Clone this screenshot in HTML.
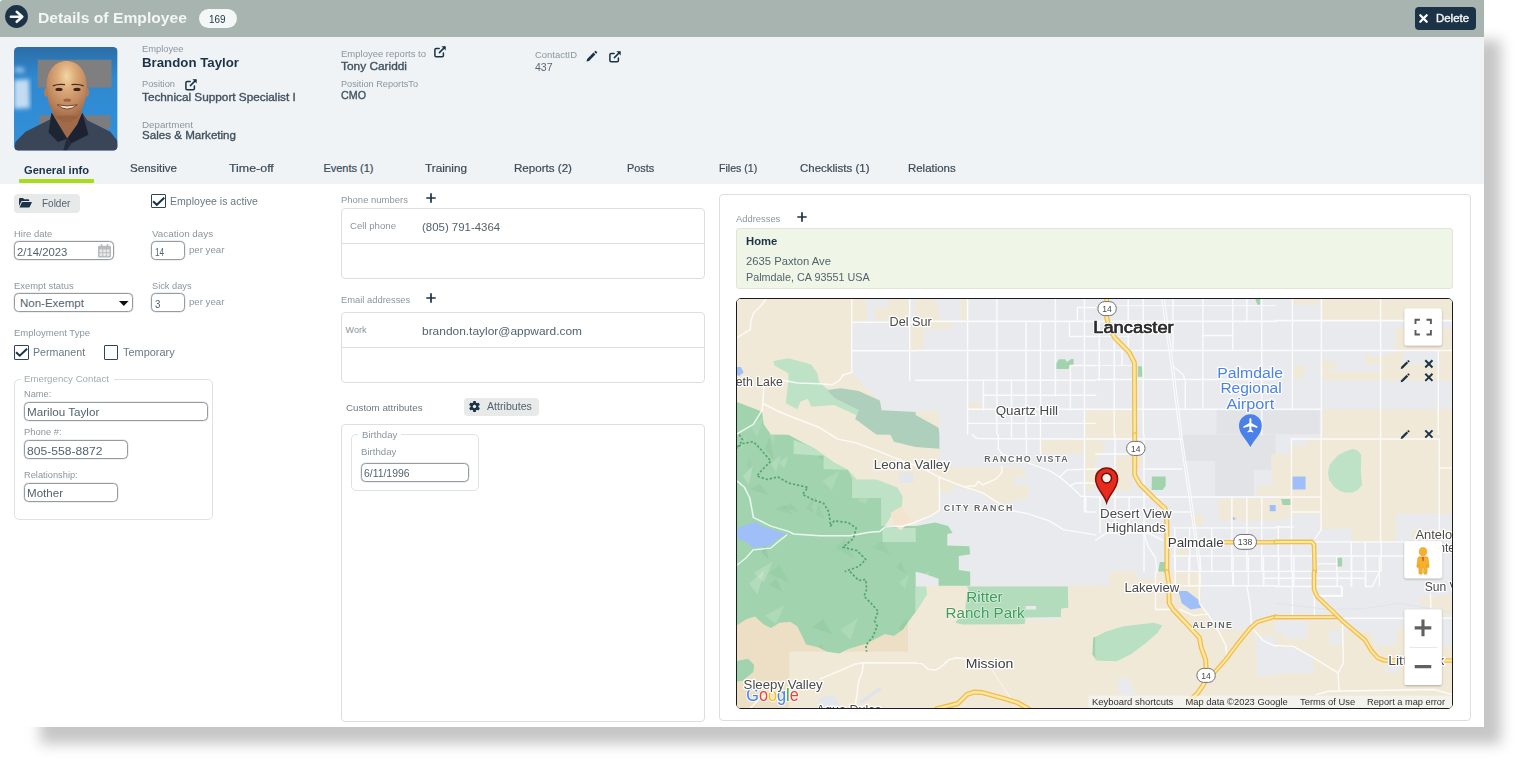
<!DOCTYPE html>
<html lang="en"><head><meta charset="utf-8"><title>Details of Employee</title>
<style>
html,body{margin:0;padding:0;background:#fff;}
body{width:1536px;height:779px;overflow:hidden;position:relative;font-family:"Liberation Sans",sans-serif;}
.a{position:absolute;box-sizing:border-box;}
#shadow{left:40px;top:40px;width:1461px;height:704px;background:rgba(0,0,0,.225);filter:blur(7px);}
#panel{left:0;top:0;width:1484px;height:727px;background:#fff;border-top-left-radius:3px;}
#hdr{left:0;top:0;width:1484px;height:37px;background:#a8b4af;border-top-left-radius:3px;}
#sub{left:0;top:37px;width:1484px;height:147.4px;background:#eff3f6;}
.t{position:absolute;white-space:nowrap;line-height:0;transform-origin:0 0;display:block;}
.inp{border:1px solid #969b9f;border-radius:4.5px;background:#fff;box-shadow:0 0 0 .5px rgba(150,155,160,.35);}
.box{border:1px solid #dcdfe1;border-radius:4px;background:#fff;}
.fs{border:1px solid #dfe2e4;border-radius:5px;}
.btn{background:#e8e9e9;border-radius:4px;}
.cb{border:1.4px solid #2f465a;background:#fff;border-radius:1px;}
.hr{height:1px;background:#dcdfe1;}
.lg{background:#fff;height:4px;}
svg{position:absolute;overflow:visible;}
</style></head><body>
<div class="a" id="shadow"></div>
<div class="a" id="panel"></div>
<div class="a" id="hdr"></div>
<div class="a" id="sub"></div>

<!-- header bar -->
<svg style="left:4.6px;top:4.6px" width="23" height="23" viewBox="0 0 23 23"><circle cx="11.5" cy="11.5" r="11.4" fill="#1b3247"/><path d="M5.8 11.8H16.8M11.7 6.8L17.3 11.8L11.7 16.8" fill="none" stroke="#f4f7f6" stroke-width="2.5" stroke-linecap="round" stroke-linejoin="round"/></svg>
<div class="a" style="left:198.8px;top:9.4px;width:38px;height:19px;border-radius:10px;background:#f3f8f7;"></div>
<div class="a" style="left:1415px;top:6.5px;width:61px;height:23.5px;border-radius:4px;background:#1b3247;"></div>
<svg style="left:1419.3px;top:14.3px" width="9" height="9" viewBox="0 0 9 9"><path d="M1.3 1.3L7.7 7.7M7.7 1.3L1.3 7.7" stroke="#fff" stroke-width="2.3" stroke-linecap="round"/></svg>

<!-- photo -->
<svg style="left:14.2px;top:47.2px" width="103.6" height="103.6" viewBox="0 0 103.6 103.6">
<defs><clipPath id="pc"><rect width="103.6" height="103.6" rx="4.5"/></clipPath>
<linearGradient id="bgG" x1="0" y1="0" x2="0" y2="1"><stop offset="0" stop-color="#2b6ea6"/><stop offset=".12" stop-color="#2d78b8"/><stop offset=".3" stop-color="#2f89d0"/><stop offset="1" stop-color="#3290da"/></linearGradient>
<radialGradient id="skinG" cx=".5" cy=".25" r=".75"><stop offset="0" stop-color="#f4d6a4"/><stop offset=".3" stop-color="#dcaa79"/><stop offset=".7" stop-color="#bd845c"/><stop offset="1" stop-color="#98623f"/></radialGradient>
<filter id="bl1"><feGaussianBlur stdDeviation="2.2"/></filter><filter id="bl2"><feGaussianBlur stdDeviation=".7"/></filter><filter id="bl3"><feGaussianBlur stdDeviation=".45"/></filter></defs>
<g clip-path="url(#pc)">
<rect width="103.6" height="103.6" fill="url(#bgG)"/>
<g filter="url(#bl3)"><polygon points="23.7,12.7 97.5,12.7 97.5,40.5 23.7,40.5" fill="#7f7f80"/>
<polygon points="25.2,68.3 96.3,68.3 96.3,82.0 25.2,82.0" fill="#7c7d7f"/></g>
<g filter="url(#bl1)"><polygon points="0.0,33.1 15.1,32.3 15.8,61.1 0.0,61.8" fill="#c4dcf2"/><polygon points="0.7,20.1 10.1,20.4 10.1,25.9 0.7,25.6" fill="#8fbce6"/></g>
<g filter="url(#bl2)"><polygon points="38.8,58.9 67.6,58.9 67.6,76.2 61.8,87.7 53.2,92.0 44.6,84.8 38.8,73.3" fill="#a16b48"/>
<polygon points="0.0,105.0 1.4,94.9 11.5,84.8 35.9,72.6 37.7,65.8 43.1,76.2 53.2,91.3 63.3,77.6 68.3,65.8 73.3,73.3 96.3,84.8 103.2,93.5 104.2,105.0" fill="#3a4558"/>
<polygon points="37.7,65.8 53.2,91.7 43.9,94.9 34.5,85.5" fill="#1f2633"/>
<polygon points="68.3,65.8 74.5,87.7 57.5,96.3 53.2,91.7 63.3,77.6" fill="#1d2431"/>
<polygon points="52.5,91.7 57.5,96.3 51.8,105.0 48.9,105.0" fill="#232b3a"/>
<path d="M52.5 14.1 C63.3 14.1 71.9 23.0 72.7 37.4 C73.2 47.4 70.7 58.9 65.0 67.9 C60.7 73.6 56.1 75.1 52.5 75.1 C48.9 75.1 44.3 73.6 40.3 67.9 C34.5 58.9 32.1 47.4 32.5 37.4 C33.1 23.0 41.7 14.1 52.5 14.1Z" fill="url(#skinG)"/>
<ellipse cx="31.9" cy="45.3" rx="1.6" ry="4.5" fill="#b57c57"/>
<ellipse cx="73.3" cy="45.3" rx="1.6" ry="4.5" fill="#b57c57"/>
</g>
<g filter="url(#bl3)">
<path d="M38.8 38.8Q44.9 36.5 51.0 37.7" stroke="#4a2f22" stroke-width="1.3" fill="none"/>
<path d="M57.5 37.7Q63.6 36.5 69.7 38.8" stroke="#4a2f22" stroke-width="1.3" fill="none"/>
<ellipse cx="45.0" cy="42.4" rx="3.6" ry="1.7" fill="#3a241b"/>
<ellipse cx="63.0" cy="42.4" rx="3.6" ry="1.7" fill="#3a241b"/>
<ellipse cx="53.2" cy="53.2" rx="3.8" ry="1.6" fill="#9c6545"/>
<path d="M43.1 57.8Q53.2 66.4 63.3 57.8Q53.2 60.0 43.1 57.8Z" fill="#f1e4d8" stroke="#7a3f30" stroke-width="1"/>
<ellipse cx="53.2" cy="70.4" rx="11" ry="2.2" fill="#8f5c3f" opacity=".55"/>
</g></g></svg>

<!-- header icons -->
<svg class="ext" style="left:185.4px;top:78.6px" width="12" height="11.5" viewBox="0 0 12 11.5"><g><path d="M5.2 2.4H2.2Q.9 2.4 .9 3.7V9.6Q.9 10.8 2.2 10.8H8.2Q9.4 10.8 9.4 9.6V7" fill="none" stroke="#1b3247" stroke-width="1.5" stroke-linecap="round"/><path d="M5.4 6.6L10.6 1.4" stroke="#1b3247" stroke-width="1.5" stroke-linecap="round"/><path d="M7.4 .3H11.7V4.6Z" fill="#1b3247"/></g></svg>
<svg class="ext" style="left:434px;top:45.6px" width="12" height="11.5" viewBox="0 0 12 11.5"><g><path d="M5.2 2.4H2.2Q.9 2.4 .9 3.7V9.6Q.9 10.8 2.2 10.8H8.2Q9.4 10.8 9.4 9.6V7" fill="none" stroke="#1b3247" stroke-width="1.5" stroke-linecap="round"/><path d="M5.4 6.6L10.6 1.4" stroke="#1b3247" stroke-width="1.5" stroke-linecap="round"/><path d="M7.4 .3H11.7V4.6Z" fill="#1b3247"/></g></svg>
<svg class="ext" style="left:609px;top:50.6px" width="12" height="11.5" viewBox="0 0 12 11.5"><g><path d="M5.2 2.4H2.2Q.9 2.4 .9 3.7V9.6Q.9 10.8 2.2 10.8H8.2Q9.4 10.8 9.4 9.6V7" fill="none" stroke="#1b3247" stroke-width="1.5" stroke-linecap="round"/><path d="M5.4 6.6L10.6 1.4" stroke="#1b3247" stroke-width="1.5" stroke-linecap="round"/><path d="M7.4 .3H11.7V4.6Z" fill="#1b3247"/></g></svg>
<svg style="left:585.6px;top:50.4px" width="12" height="12" viewBox="0 0 12 12"><g><path d="M.5 11.5L1.1 9L7.5 2.6L9.4 4.5L3 10.9Z" fill="#1b3247"/><path d="M8.2 1.9L9.1 1Q9.5.6 9.9 1L11 2.1Q11.4 2.5 11 2.9L10.1 3.8Z" fill="#1b3247"/></g></svg>

<!-- tab underline -->
<div class="a" style="left:18.7px;top:179px;width:75.6px;height:4.4px;background:#a8dc1a;border-radius:1px;"></div>

<!-- left column -->
<div class="a btn" style="left:14px;top:194px;width:66.2px;height:19px;"></div>
<svg style="left:18.8px;top:198.4px" width="13" height="9.4" viewBox="0 0 13 9.4"><path d="M0 1Q0 0 1 0H4L5.2 1.3H9.2Q10.2 1.3 10.2 2.3V3.1H3.2Q2.4 3.1 2 3.9L0 8Z" fill="#1b3247"/><path d="M.5 9.4L2.7 4.5Q3 3.9 3.6 3.9H12.4Q13.1 3.9 12.8 4.6L10.8 8.8Q10.5 9.4 9.9 9.4Z" fill="#1b3247"/></svg>
<div class="a cb" style="left:151px;top:194px;width:14.7px;height:14.2px;"></div>
<svg style="left:151px;top:194px" width="14.7" height="14.2" viewBox="0 0 14.7 14.2"><g><path d="M2.1 7.2L5.8 10.8L13.3 3.7" fill="none" stroke="#1b3247" stroke-width="2"/></g></svg>

<div class="a inp" style="left:14px;top:241.3px;width:99.6px;height:18.9px;"></div>
<svg style="left:98px;top:244.3px" width="13" height="13.6" viewBox="0 0 13 13.6"><rect x="0" y="1.7" width="13" height="11.9" rx="1.3" fill="#b9bcbe"/><rect x="2.6" y="0" width="1.8" height="3.4" rx=".8" fill="#b9bcbe"/><rect x="8.6" y="0" width="1.8" height="3.4" rx=".8" fill="#b9bcbe"/><g fill="#e9eaea"><rect x="1.6" y="5.5" width="2.7" height="2.7"/><rect x="5.2" y="5.5" width="2.7" height="2.7"/><rect x="8.8" y="5.5" width="2.7" height="2.7"/><rect x="1.6" y="9.2" width="2.7" height="2.7"/><rect x="5.2" y="9.2" width="2.7" height="2.7"/><rect x="8.8" y="9.2" width="2.7" height="2.7"/></g></svg>
<div class="a inp" style="left:151px;top:241.3px;width:33.6px;height:18.9px;"></div>
<div class="a inp" style="left:14px;top:293.2px;width:118.7px;height:19.1px;"></div>
<svg style="left:118.6px;top:301px" width="9.6" height="5" viewBox="0 0 9.6 5"><path d="M0 0H9.6L4.8 5Z" fill="#111"/></svg>
<div class="a inp" style="left:151px;top:293.2px;width:33.6px;height:19.1px;"></div>

<div class="a cb" style="left:14px;top:345.4px;width:14.5px;height:14.2px;"></div>
<svg style="left:14px;top:345.4px" width="14.5" height="14.2" viewBox="0 0 14.7 14.2"><g><path d="M2.1 7.2L5.8 10.8L13.3 3.7" fill="none" stroke="#1b3247" stroke-width="2"/></g></svg>
<div class="a cb" style="left:103.9px;top:345.4px;width:14.5px;height:14.2px;"></div>

<div class="a fs" style="left:14.4px;top:379px;width:198.6px;height:141px;"></div>
<div class="a lg" style="left:21px;top:377px;width:93px;"></div>
<div class="a inp" style="left:23.7px;top:402.3px;width:184.5px;height:18.5px;"></div>
<div class="a inp" style="left:23.7px;top:440.1px;width:104.3px;height:18.7px;"></div>
<div class="a inp" style="left:23.7px;top:483px;width:94.3px;height:18.6px;"></div>

<!-- middle column -->
<svg style="left:425.7px;top:192.9px" width="10" height="10" viewBox="0 0 10 10"><g><path d="M5 .3V9.7M.3 5H9.7" stroke="#1b3247" stroke-width="1.7" fill="none"/></g></svg>
<div class="a box" style="left:341px;top:208.3px;width:364px;height:70.3px;"></div>
<div class="a hr" style="left:342px;top:243px;width:362px;"></div>
<svg style="left:425.7px;top:292.6px" width="10" height="10" viewBox="0 0 10 10"><g><path d="M5 .3V9.7M.3 5H9.7" stroke="#1b3247" stroke-width="1.7" fill="none"/></g></svg>
<div class="a box" style="left:341px;top:312.2px;width:364px;height:70.6px;"></div>
<div class="a hr" style="left:342px;top:347.2px;width:362px;"></div>
<div class="a btn" style="left:463.9px;top:397.6px;width:75.1px;height:18.8px;"></div>
<svg style="left:468.6px;top:401.4px" width="11" height="11" viewBox="0 0 11 11"><g fill="#1b3247"><circle cx="5.5" cy="5.5" r="3.9"/><g><rect x="4.1" y="0" width="2.8" height="11" rx=".6"/></g><g transform="rotate(60 5.5 5.5)"><rect x="4.1" y="0" width="2.8" height="11" rx=".6"/></g><g transform="rotate(120 5.5 5.5)"><rect x="4.1" y="0" width="2.8" height="11" rx=".6"/></g></g><circle cx="5.5" cy="5.5" r="1.7" fill="#e8e9e9"/></svg>
<div class="a box" style="left:341px;top:424px;width:364px;height:297.6px;"></div>
<div class="a fs" style="left:351.2px;top:434.3px;width:127.5px;height:56.3px;"></div>
<div class="a lg" style="left:357.5px;top:432.5px;width:43.5px;"></div>
<div class="a inp" style="left:360.6px;top:463.2px;width:108.7px;height:18.7px;"></div>

<!-- right column -->
<div class="a box" style="left:719.3px;top:194px;width:752px;height:527.4px;"></div>
<svg style="left:796.7px;top:212.4px" width="10" height="10" viewBox="0 0 10 10"><g><path d="M5 .3V9.7M.3 5H9.7" stroke="#1b3247" stroke-width="1.7" fill="none"/></g></svg>
<div class="a" style="left:736.3px;top:227.5px;width:716.4px;height:61.3px;background:#eff6e8;border:1px solid #dfe6d6;border-radius:3px;"></div>
<div class="a" id="map" style="left:736.3px;top:298.3px;width:716.4px;height:410.8px;border:1px solid #1c1c1c;border-radius:5px;overflow:hidden;background:#e8eaed;">
<svg style="left:0;top:0" width="714.4" height="408.8" viewBox="737.3 299.3 714.4 408.8">
<rect x="736" y="298" width="718" height="412" fill="#e8eaed"/>
<polygon points="736.0,298.0 867.0,298.0 867.0,320.9 852.0,322.6 852.0,373.6 881.9,403.5 881.9,410.5 916.0,412.3 938.9,410.5 938.9,434.9 939.7,449.1 939.7,467.5 1021.5,467.5 1028.5,477.2 1014.4,477.2 1014.4,485.1 1028.5,485.1 1028.5,499.2 1014.4,500.0 1010.9,503.6 991.6,501.8 982.8,494.8 952.9,486.0 952.9,493.0 939.7,493.0 939.7,512.3 930.1,517.6 916.0,522.9 916.0,526.4 736.0,526.4" fill="#f1e9d8"/>
<polygon points="874.9,307.7 887.2,307.7 887.2,299.8 909.1,299.8 909.1,321.7 874.9,321.7" fill="#f1e9d8" />
<polygon points="910.9,324.4 916.0,324.4 916.0,349.9 910.9,349.9" fill="#f1e9d8" />
<polygon points="916.0,299.8 937.1,299.8 939.7,320.9 952.9,322.6 952.9,328.8 923.9,329.6 923.9,349.9 916.0,349.9" fill="#f1e9d8" />
<polygon points="960.8,299.8 967.0,299.8 967.0,320.9 960.8,320.9" fill="#f1e9d8" />
<polygon points="969.6,403.1 981.9,403.1 981.9,409.1 969.6,409.1" fill="#f1e9d8" />
<polygon points="1086.2,410.5 1096.0,410.5 1096.0,434.9 1086.2,434.9" fill="#f1e9d8" />
<polygon points="1096.0,410.5 1132.0,410.5 1132.0,434.9 1096.0,434.9" fill="#f1e9d8" />
<polygon points="1292.7,299.8 1319.9,299.8 1319.9,305.0 1292.7,305.0" fill="#f1e9d8" />
<polygon points="1322.1,299.8 1452.7,299.8 1452.7,320.0 1322.1,320.0" fill="#f1e9d8" />
<polygon points="1395.5,328.8 1452.7,328.8 1452.7,350.7 1395.5,350.7" fill="#f1e9d8" />
<polygon points="1322.1,358.6 1339.3,364.8 1328.7,371.8 1322.1,371.8" fill="#f1e9d8" />
<polygon points="1322.1,371.8 1452.7,371.8 1452.7,380.6 1322.1,380.6" fill="#f1e9d8" />
<polygon points="1365.6,351.6 1371.8,357.8 1381.5,356.0 1402.6,351.6 1402.6,364.8 1365.6,364.8" fill="#f1e9d8" />
<polygon points="1381.5,364.8 1439.5,364.8 1439.5,371.8 1381.5,371.8" fill="#f1e9d8" />
<polygon points="1440.4,350.7 1452.7,350.7 1452.7,380.6 1440.4,380.6" fill="#f1e9d8" />
<polygon points="1295.3,365.7 1307.6,365.7 1300.6,379.7 1292.7,379.7" fill="#f1e9d8" />
<polygon points="1322.1,409.6 1452.7,409.6 1452.7,434.9 1322.1,434.9" fill="#f1e9d8" />
<polygon points="1276.0,410.5 1319.9,410.5 1319.9,434.9 1276.0,434.9" fill="#e1e3e7" />
<polygon points="1216.8,410.5 1276.0,410.5 1276.0,434.9 1216.8,434.9" fill="#e1e3e7" />
<polygon points="1041.7,440.3 1084.8,440.3 1084.8,453.5 1041.7,453.5" fill="#f1e9d8" />
<polygon points="1086.2,435.0 1096.0,435.0 1096.0,489.5 1086.2,489.5" fill="#f1e9d8" />
<polygon points="1182.1,435.0 1276.0,435.0 1276.0,454.3 1271.8,454.3 1271.8,470.2 1254.2,470.2 1254.2,496.5 1215.5,496.5 1215.5,461.4 1185.6,461.4" fill="#e1e3e7" />
<polygon points="1096.0,435.0 1132.0,435.0 1132.0,438.9 1096.0,438.9" fill="#f1e9d8" />
<polygon points="1096.0,440.3 1101.3,440.3 1106.5,447.3 1096.0,461.4" fill="#f1e9d8" />
<polygon points="1115.3,456.1 1142.6,456.1 1142.6,468.4 1132.0,468.4 1132.0,491.2 1117.1,491.2" fill="#f1e9d8" />
<polygon points="1219.0,499.2 1276.0,499.2 1276.0,521.1 1219.0,521.1" fill="#f1e9d8" />
<polygon points="1271.8,454.3 1276.0,454.3 1276.0,496.5 1257.7,496.5 1257.7,486.0 1271.8,486.0" fill="#f1e9d8" />
<polygon points="1191.8,514.1 1203.2,515.9 1203.2,526.4 1194.4,526.4" fill="#f1e9d8" />
<polygon points="1176.0,550.1 1189.2,550.1 1189.2,556.3 1176.0,556.3" fill="#f1e9d8" />
<polygon points="1276.0,435.0 1452.7,435.0 1452.7,514.1 1396.4,514.1 1396.4,542.2 1351.6,542.2 1351.6,528.2 1319.9,529.9 1319.9,514.1 1293.6,514.1 1293.6,517.6 1276.0,521.1" fill="#f1e9d8" />
<polygon points="1276.0,435.0 1319.9,435.0 1319.9,438.5 1306.8,438.5 1306.8,445.5 1290.9,445.5 1290.9,454.3 1276.0,454.3" fill="#e8eaed" />
<polygon points="1412.2,529.9 1452.7,529.9 1452.7,540.5 1412.2,540.5" fill="#f1e9d8" />
<polygon points="736.0,572.0 916.0,572.0 916.0,708.9 736.0,708.9" fill="#f1e9d8" />
<polygon points="736.0,607.2 908.3,607.2 908.3,652.0 789.6,652.0 789.6,708.9 736.0,708.9" fill="#ecdfc5" />
<polygon points="916.0,586.1 1096.0,586.1 1096.0,708.9 916.0,708.9" fill="#f1e9d8" />
<polygon points="1096.0,572.0 1201.5,572.0 1201.5,603.6 1208.5,614.2 1219.0,630.0 1248.9,630.0 1254.2,623.0 1276.0,615.9 1276.0,637.0 1256.0,637.0 1257.7,675.7 1276.0,675.7 1276.0,708.9 1096.0,708.9" fill="#f1e9d8" />
<polygon points="1096.0,572.0 1110.1,572.0 1110.1,586.1 1096.0,586.1" fill="#e8eaed" />
<polygon points="1136.4,572.0 1155.8,572.0 1155.8,579.0 1136.4,579.0" fill="#e8eaed" />
<polygon points="1118.9,677.5 1127.6,677.5 1136.4,695.0 1118.9,695.0" fill="#e8eaed" />
<polygon points="1271.8,634.4 1276.0,634.4 1276.0,645.8 1271.8,644.1" fill="#f1e9d8" />
<polygon points="1276.0,633.5 1284.8,633.5 1284.8,638.8 1307.6,638.8 1307.6,621.2 1342.8,621.2 1342.8,631.8 1372.7,632.6 1374.4,645.8 1452.7,645.8 1452.7,708.9 1276.0,708.9" fill="#f1e9d8" />
<polygon points="1395.5,645.8 1397.3,630.0 1406.1,624.7 1406.1,645.8" fill="#f1e9d8" />
<polygon points="1420.1,598.4 1452.7,594.9 1452.7,615.9 1443.0,615.9 1430.7,607.2 1420.1,605.4" fill="#f1e9d8" />
<polygon points="1276.0,647.6 1293.6,646.7 1313.8,656.4 1313.8,674.0 1276.0,674.0" fill="#e8eaed" />
<polygon points="1329.6,630.9 1341.9,630.9 1341.9,644.9 1329.6,644.9" fill="#e8eaed" />
<polygon points="1385.0,666.9 1399.0,666.9 1399.0,673.1 1385.0,673.1" fill="#e8eaed" />
<polygon points="1256.0,637.0 1276.0,637.0 1276.0,675.7 1257.7,675.7" fill="#e8eaed" />
<polygon points="773.8,361.3 788.7,358.6 811.6,364.8 817.7,373.6 819.5,382.4 827.4,389.4 834.4,398.2 859.0,410.5 857.3,415.8 834.4,405.2 811.6,407.0 808.1,399.1 801.0,401.7 797.5,409.6 786.1,403.5 788.7,380.6 788.7,373.6 774.7,365.7" fill="#bde2c6" />
<polygon points="827.4,390.3 841.5,388.5 859.0,391.2 880.1,400.8 881.9,410.5 916.0,412.3 916.0,415.4 938.9,428.1 939.7,435.0 939.7,449.1 916.0,447.3 894.2,442.0 890.7,435.0 876.6,434.9 855.5,419.3 859.0,410.5 834.4,398.2" fill="#adcfbc"/>
<polygon points="736.0,401.7 758.9,410.5 762.4,412.3 764.1,424.6 771.2,434.9 788.7,435.0 815.1,449.1 834.4,463.1 848.5,470.2 852.9,478.9 852.9,498.3 881.9,498.3 881.9,526.4 916.0,526.4 935.3,522.9 948.5,526.4 952.9,533.4 947.6,534.3 947.6,545.7 969.6,546.6 970.5,554.5 959.1,556.3 959.1,570.4 970.5,572.0 970.5,586.1 938.9,586.1 938.9,579.0 923.9,573.8 916.0,572.0 916.0,612.4 911.8,617.7 903.0,630.0 894.2,636.2 885.4,634.4 876.6,638.8 866.1,644.1 848.5,649.3 839.7,653.7 827.4,652.0 818.6,647.6 806.3,644.9 802.8,637.0 797.5,626.5 790.5,622.1 779.9,623.0 771.2,628.2 764.1,624.7 755.3,616.8 746.5,619.5 736.0,626.5" fill="#a1d4ae"/>
<clipPath id="fclip"><polygon points="736.0,401.7 758.9,410.5 762.4,412.3 764.1,424.6 771.2,434.9 788.7,435.0 815.1,449.1 834.4,463.1 848.5,470.2 852.9,478.9 852.9,498.3 881.9,498.3 881.9,526.4 916.0,526.4 935.3,522.9 948.5,526.4 952.9,533.4 947.6,534.3 947.6,545.7 969.6,546.6 970.5,554.5 959.1,556.3 959.1,570.4 970.5,572.0 970.5,586.1 938.9,586.1 938.9,579.0 923.9,573.8 916.0,572.0 916.0,612.4 911.8,617.7 903.0,630.0 894.2,636.2 885.4,634.4 876.6,638.8 866.1,644.1 848.5,649.3 839.7,653.7 827.4,652.0 818.6,647.6 806.3,644.9 802.8,637.0 797.5,626.5 790.5,622.1 779.9,623.0 771.2,628.2 764.1,624.7 755.3,616.8 746.5,619.5 736.0,626.5"/></clipPath><g clip-path="url(#fclip)">
<polygon points="798.6,443.5 814.0,437.9 807.1,448.0" fill="#ffffff" fill-opacity="0.15"/>
<polygon points="806.4,419.8 813.2,429.4 798.9,424.6" fill="#2f7a4a" fill-opacity="0.06"/>
<polygon points="751.1,428.1 763.6,416.4 757.9,437.8" fill="#ffffff" fill-opacity="0.11"/>
<polygon points="779.7,565.0 789.4,582.7 769.1,573.8" fill="#2f7a4a" fill-opacity="0.06"/>
<polygon points="920.6,416.9 938.7,409.5 930.5,422.9" fill="#ffffff" fill-opacity="0.11"/>
<polygon points="760.0,483.7 768.8,495.4 750.3,489.5" fill="#2f7a4a" fill-opacity="0.07"/>
<polygon points="857.5,500.0 871.6,494.5 865.2,504.4" fill="#ffffff" fill-opacity="0.11"/>
<polygon points="776.5,578.5 782.8,592.2 769.6,585.4" fill="#2f7a4a" fill-opacity="0.07"/>
<polygon points="822.7,481.4 840.1,470.7 832.3,490.2" fill="#ffffff" fill-opacity="0.12"/>
<polygon points="845.4,538.9 854.6,558.9 835.3,548.9" fill="#2f7a4a" fill-opacity="0.05"/>
<polygon points="921.3,435.1 933.7,423.9 928.1,444.3" fill="#ffffff" fill-opacity="0.12"/>
<polygon points="829.4,415.0 837.3,435.5 820.8,425.2" fill="#2f7a4a" fill-opacity="0.07"/>
<polygon points="901.7,485.0 917.8,475.2 910.5,493.1" fill="#ffffff" fill-opacity="0.16"/>
<polygon points="823.3,619.2 833.0,635.3 812.7,627.2" fill="#2f7a4a" fill-opacity="0.07"/>
<polygon points="749.3,583.9 764.8,570.7 757.8,594.6" fill="#ffffff" fill-opacity="0.18"/>
<polygon points="791.2,503.4 799.1,512.7 782.6,508.0" fill="#2f7a4a" fill-opacity="0.06"/>
<polygon points="769.4,434.9 777.2,423.6 773.7,444.1" fill="#ffffff" fill-opacity="0.11"/>
<polygon points="784.3,504.7 793.5,514.9 774.2,509.8" fill="#2f7a4a" fill-opacity="0.06"/>
<polygon points="840.7,630.3 858.4,618.2 850.5,640.1" fill="#ffffff" fill-opacity="0.13"/>
<polygon points="815.7,496.5 824.9,519.9 805.5,508.2" fill="#2f7a4a" fill-opacity="0.05"/>
<polygon points="771.0,464.1 781.0,455.2 776.5,471.5" fill="#ffffff" fill-opacity="0.16"/>
<polygon points="787.1,406.0 793.4,420.6 780.3,413.3" fill="#2f7a4a" fill-opacity="0.07"/>
<polygon points="916.2,581.1 929.9,571.0 923.8,589.3" fill="#ffffff" fill-opacity="0.17"/>
<polygon points="748.1,634.4 756.7,656.5 738.7,645.4" fill="#2f7a4a" fill-opacity="0.08"/>
<polygon points="811.4,506.7 819.7,496.6 816.0,515.1" fill="#ffffff" fill-opacity="0.11"/>
<polygon points="750.6,458.2 755.1,472.3 745.6,465.3" fill="#2f7a4a" fill-opacity="0.04"/>
<polygon points="738.0,443.6 746.4,435.6 742.6,450.1" fill="#ffffff" fill-opacity="0.10"/>
<polygon points="901.5,561.6 906.0,574.4 896.6,568.0" fill="#2f7a4a" fill-opacity="0.06"/>
<polygon points="806.1,436.3 824.1,423.2 816.0,447.1" fill="#ffffff" fill-opacity="0.15"/>
<polygon points="828.5,426.9 832.6,441.0 823.9,434.0" fill="#2f7a4a" fill-opacity="0.05"/>
<polygon points="893.0,446.2 900.3,433.4 897.0,456.6" fill="#ffffff" fill-opacity="0.15"/>
<polygon points="765.4,543.5 769.1,560.4 761.4,552.0" fill="#2f7a4a" fill-opacity="0.09"/>
<polygon points="899.4,582.5 909.8,574.6 905.2,589.1" fill="#ffffff" fill-opacity="0.12"/>
<polygon points="882.4,540.8 890.9,554.8 872.9,547.8" fill="#2f7a4a" fill-opacity="0.05"/>
<polygon points="889.8,656.2 907.8,644.6 899.7,665.6" fill="#ffffff" fill-opacity="0.18"/>
<polygon points="876.4,462.8 883.2,477.2 868.8,470.0" fill="#2f7a4a" fill-opacity="0.04"/>
<polygon points="743.2,476.3 753.6,465.6 748.9,485.0" fill="#ffffff" fill-opacity="0.20"/>
<polygon points="821.6,643.9 831.6,667.3 810.7,655.6" fill="#2f7a4a" fill-opacity="0.06"/>
<polygon points="779.2,462.8 788.8,456.2 784.5,468.3" fill="#ffffff" fill-opacity="0.16"/>
<polygon points="906.4,619.3 913.0,638.1 899.1,628.7" fill="#2f7a4a" fill-opacity="0.08"/>
<polygon points="753.9,573.4 772.7,562.0 764.2,582.8" fill="#ffffff" fill-opacity="0.18"/>
<polygon points="827.4,450.5 836.0,464.5 817.9,457.5" fill="#2f7a4a" fill-opacity="0.08"/>
<polygon points="919.7,505.9 931.9,493.2 926.4,516.4" fill="#ffffff" fill-opacity="0.17"/>
<polygon points="769.8,437.4 774.3,460.0 764.9,448.7" fill="#2f7a4a" fill-opacity="0.08"/>
<polygon points="765.3,615.8 785.1,605.4 776.2,624.2" fill="#ffffff" fill-opacity="0.14"/>
<polygon points="840.6,438.4 844.2,462.0 836.6,450.2" fill="#2f7a4a" fill-opacity="0.07"/>
</g>
<polygon points="848.5,470.2 857.3,479.8 876.6,479.8 897.7,487.7 903.0,496.5 902.1,507.1 894.2,512.3 890.7,517.6 885.4,526.4 881.9,526.4 881.9,498.3 852.9,498.3 852.9,478.9" fill="#bde2c6" />
<polygon points="882.8,528.2 916.0,528.2 916.0,542.2 882.8,542.2" fill="#bde2c6" />
<polygon points="794.0,440.3 815.1,449.1 834.4,463.1 848.5,470.2 823.9,469.3 823.9,456.1 794.0,454.3" fill="#bde2c6" />
<polygon points="890.7,513.2 901.2,507.1 911.8,519.4 901.2,530.8 895.1,526.4" fill="#f2e4cf" />
<polygon points="736.0,661.6 748.3,659.0 754.5,665.2 753.6,672.2 743.0,681.0 736.0,681.9" fill="#a1d4ae" />
<polygon points="916.0,586.9 926.5,586.9 927.4,594.9 919.5,607.2 916.0,612.4" fill="#bde2c6" />
<polygon points="967.0,586.9 1068.1,586.9 1068.6,608.0 1061.5,608.9 1061.0,617.4 1025.9,618.1 1025.0,624.4 962.6,624.7 955.6,623.0 958.2,619.5 965.2,618.6 966.1,603.6 968.7,589.6" fill="#b2dcbc" />
<polygon points="1025.9,606.3 1036.4,606.3 1036.4,609.8 1025.9,609.8" fill="#e8eaed" />
<polygon points="1025.9,618.1 1061.9,618.1 1061.9,620.3 1025.9,620.3" fill="#e8eaed" />
<polygon points="1093.5,637.9 1096.0,637.0 1096.0,659.9 1092.7,654.6" fill="#a1d4ae" />
<polygon points="1096.0,637.0 1106.5,631.8 1124.1,626.5 1154.0,623.0 1162.8,625.6 1157.5,633.5 1145.2,644.1 1131.2,654.6 1117.1,661.6 1096.0,660.8" fill="#b9e0c3" />
<polygon points="1056.6,363.9 1059.3,359.5 1065.4,359.5 1067.2,362.2 1071.6,359.2 1073.9,359.2 1073.9,364.8 1069.8,365.7 1068.9,369.2 1056.6,369.2" fill="#a1d4ae" />
<polygon points="1138.2,366.6 1142.1,366.6 1143.1,377.1 1138.2,377.1" fill="#a1d4ae" />
<polygon points="1255.1,298.0 1260.4,298.0 1260.4,305.0 1257.7,305.0" fill="#a1d4ae" />
<polygon points="1152.2,476.8 1166.0,476.8 1166.0,486.0 1162.8,490.4 1151.9,490.4" fill="#a1d4ae" />
<polygon points="1160.2,562.4 1165.4,562.4 1166.3,571.9 1158.4,571.9" fill="#a1d4ae" />
<polygon points="1353.3,449.1 1358.6,451.2 1361.6,455.2 1361.1,471.9 1362.5,485.1 1358.6,489.8 1353.3,492.7 1346.3,492.7 1340.7,491.6 1334.0,486.9 1329.4,479.8 1328.4,472.8 1330.1,464.9 1337.9,455.7 1345.4,451.7" fill="#bde2c6" />
<polygon points="1281.3,499.2 1290.9,499.2 1290.9,505.3 1283.0,505.3" fill="#a1d4ae" />
<polygon points="1337.5,558.0 1342.4,558.0 1342.4,566.8 1337.5,566.8" fill="#a1d4ae" />
<polygon points="736.0,367.4 741.3,367.4 743.9,372.7 739.5,376.2 736.0,375.3" fill="#a0bff8" />
<polygon points="737.8,528.2 755.3,522.0 762.4,526.4 787.0,534.3 778.2,538.7 771.2,545.7 753.6,548.4 746.5,542.2 737.8,538.7" fill="#a0bff8" />
<polygon points="1178.6,591.3 1187.4,591.3 1198.8,600.1 1201.5,608.0 1190.9,609.8 1182.1,603.6" fill="#a0bff8" />
<polygon points="1292.7,476.8 1305.9,476.8 1305.9,489.8 1292.7,489.8" fill="#a0bff8" />
<polygon points="1270.0,505.3 1276.0,505.3 1276.0,511.5 1270.0,511.5" fill="#a0bff8" />
<polygon points="1233.1,516.7 1236.6,519.4 1233.1,520.3" fill="#a0bff8" />
<polygon points="899.5,472.8 913.5,472.8 913.5,483.3 899.5,483.3" fill="#e3e6ea" />
<polygon points="818.6,698.6 834.4,695.0 841.5,708.9 818.6,708.9" fill="#e3e6ea" />
<polygon points="859.0,702.1 880.1,687.1 881.9,689.8 862.6,703.8" fill="#dfe3ea" />
<g opacity=".8">
<polyline points="765.9,299.8 760.6,306.8 753.6,313.8 750.9,322.6 750.9,329.6 739.5,336.7 736.0,339.3" fill="none" stroke="#fff" stroke-width="1.45" stroke-linejoin="round" stroke-linecap="round" />
<polyline points="783.5,380.6 797.5,383.3 820.4,384.1 832.7,385.0 839.7,380.6 843.2,375.3 852.0,372.7" fill="none" stroke="#fff" stroke-width="1.45" stroke-linejoin="round" stroke-linecap="round" />
<polyline points="764.1,387.6 763.2,403.5 762.4,410.5 753.6,424.6 736.0,434.9" fill="none" stroke="#fff" stroke-width="1.45" stroke-linejoin="round" stroke-linecap="round" />
<polyline points="764.1,404.3 779.9,412.3 797.5,419.3 820.4,428.1 830.9,434.9" fill="none" stroke="#fff" stroke-width="1.45" stroke-linejoin="round" stroke-linecap="round" />
<polyline points="852.0,298.0 852.0,372.7" fill="none" stroke="#fff" stroke-width="1.45" stroke-linejoin="round" stroke-linecap="round" />
<polyline points="852.0,322.6 916.0,322.6" fill="none" stroke="#fff" stroke-width="1.45" stroke-linejoin="round" stroke-linecap="round" />
<polyline points="916.0,321.7 1096.0,321.7" fill="none" stroke="#fff" stroke-width="1.6" stroke-linejoin="round" stroke-linecap="round" />
<polyline points="1096.0,321.7 1276.0,321.7" fill="none" stroke="#fff" stroke-width="1.6" stroke-linejoin="round" stroke-linecap="round" />
<polyline points="1276.0,320.9 1452.7,320.9" fill="none" stroke="#fff" stroke-width="1.6" stroke-linejoin="round" stroke-linecap="round" />
<polyline points="852.0,351.1 916.0,351.1" fill="none" stroke="#fff" stroke-width="1.45" stroke-linejoin="round" stroke-linecap="round" />
<polyline points="916.0,350.7 1096.0,350.7" fill="none" stroke="#fff" stroke-width="1.45" stroke-linejoin="round" stroke-linecap="round" />
<polyline points="1096.0,350.7 1276.0,350.7" fill="none" stroke="#fff" stroke-width="1.45" stroke-linejoin="round" stroke-linecap="round" />
<polyline points="1276.0,350.7 1452.7,350.7" fill="none" stroke="#fff" stroke-width="1.45" stroke-linejoin="round" stroke-linecap="round" />
<polyline points="910.0,298.0 910.0,380.6" fill="none" stroke="#fff" stroke-width="1.45" stroke-linejoin="round" stroke-linecap="round" />
<polyline points="916.0,380.6 1096.0,380.6" fill="none" stroke="#fff" stroke-width="1.45" stroke-linejoin="round" stroke-linecap="round" />
<polyline points="983.7,395.6 1096.0,395.6" fill="none" stroke="#fff" stroke-width="1.45" stroke-linejoin="round" stroke-linecap="round" />
<polyline points="968.7,409.6 1096.0,409.6" fill="none" stroke="#fff" stroke-width="1.45" stroke-linejoin="round" stroke-linecap="round" />
<polyline points="968.7,423.7 1096.0,423.7" fill="none" stroke="#fff" stroke-width="1.45" stroke-linejoin="round" stroke-linecap="round" />
<polyline points="967.9,298.0 967.9,434.9" fill="none" stroke="#fff" stroke-width="1.45" stroke-linejoin="round" stroke-linecap="round" />
<polyline points="997.2,298.0 997.2,434.9" fill="none" stroke="#fff" stroke-width="1.45" stroke-linejoin="round" stroke-linecap="round" />
<polyline points="1026.4,321.7 1026.4,434.9" fill="none" stroke="#fff" stroke-width="1.45" stroke-linejoin="round" stroke-linecap="round" />
<polyline points="1040.8,321.7 1040.8,434.9" fill="none" stroke="#fff" stroke-width="1.45" stroke-linejoin="round" stroke-linecap="round" />
<polyline points="1055.7,298.0 1055.7,396.4" fill="none" stroke="#fff" stroke-width="1.45" stroke-linejoin="round" stroke-linecap="round" />
<polyline points="1084.8,298.0 1084.8,434.9" fill="none" stroke="#fff" stroke-width="1.45" stroke-linejoin="round" stroke-linecap="round" />
<polyline points="1070.7,365.7 1070.7,410.5" fill="none" stroke="#fff" stroke-width="1.45" stroke-linejoin="round" stroke-linecap="round" />
<polyline points="983.7,380.6 983.7,410.5" fill="none" stroke="#fff" stroke-width="1.45" stroke-linejoin="round" stroke-linecap="round" />
<polyline points="1011.8,380.6 1011.8,434.9" fill="none" stroke="#fff" stroke-width="1.45" stroke-linejoin="round" stroke-linecap="round" />
<polyline points="1096.0,307.7 1077.7,307.7 1077.7,321.7" fill="none" stroke="#fff" stroke-width="1.45" stroke-linejoin="round" stroke-linecap="round" />
<polyline points="1069.8,321.7 1069.8,336.7 1096.0,336.7" fill="none" stroke="#fff" stroke-width="1.45" stroke-linejoin="round" stroke-linecap="round" />
<polyline points="1070.7,365.7 1096.0,365.7" fill="none" stroke="#fff" stroke-width="1.45" stroke-linejoin="round" stroke-linecap="round" />
<polyline points="1096.0,305.9 1276.0,305.9" fill="none" stroke="#fff" stroke-width="0.9" stroke-linejoin="round" stroke-linecap="round" />
<polyline points="1203.2,335.8 1233.1,335.8" fill="none" stroke="#fff" stroke-width="1.45" stroke-linejoin="round" stroke-linecap="round" />
<polyline points="1096.0,379.7 1276.0,379.7" fill="none" stroke="#fff" stroke-width="1.45" stroke-linejoin="round" stroke-linecap="round" />
<polyline points="1096.0,409.6 1276.0,409.6" fill="none" stroke="#fff" stroke-width="1.45" stroke-linejoin="round" stroke-linecap="round" />
<polyline points="1096.0,336.7 1131.2,336.7" fill="none" stroke="#fff" stroke-width="0.9" stroke-linejoin="round" stroke-linecap="round" />
<polyline points="1096.0,365.7 1132.9,365.7" fill="none" stroke="#fff" stroke-width="0.9" stroke-linejoin="round" stroke-linecap="round" />
<polyline points="1099.5,321.7 1099.5,380.6" fill="none" stroke="#fff" stroke-width="1.45" stroke-linejoin="round" stroke-linecap="round" />
<polyline points="1114.5,333.2 1114.5,434.9" fill="none" stroke="#fff" stroke-width="1.45" stroke-linejoin="round" stroke-linecap="round" />
<polyline points="1128.5,298.0 1128.5,350.7" fill="none" stroke="#fff" stroke-width="1.45" stroke-linejoin="round" stroke-linecap="round" />
<polyline points="1143.5,298.0 1143.5,434.9" fill="none" stroke="#fff" stroke-width="1.45" stroke-linejoin="round" stroke-linecap="round" />
<polyline points="1173.3,298.0 1173.3,350.7" fill="none" stroke="#fff" stroke-width="1.45" stroke-linejoin="round" stroke-linecap="round" />
<polyline points="1185.6,379.7 1185.6,409.6" fill="none" stroke="#fff" stroke-width="1.45" stroke-linejoin="round" stroke-linecap="round" />
<polyline points="1203.2,298.0 1203.2,409.6" fill="none" stroke="#fff" stroke-width="1.45" stroke-linejoin="round" stroke-linecap="round" />
<polyline points="1233.1,298.0 1233.1,350.7" fill="none" stroke="#fff" stroke-width="1.45" stroke-linejoin="round" stroke-linecap="round" />
<polyline points="1247.2,298.0 1247.2,321.7" fill="none" stroke="#fff" stroke-width="1.45" stroke-linejoin="round" stroke-linecap="round" />
<polyline points="1262.1,298.0 1262.1,434.9" fill="none" stroke="#fff" stroke-width="1.45" stroke-linejoin="round" stroke-linecap="round" />
<polyline points="1122.4,350.7 1122.4,365.7" fill="none" stroke="#fff" stroke-width="1.45" stroke-linejoin="round" stroke-linecap="round" />
<polyline points="1161.9,298.0 1171.6,368.3 1180.0,434.9" fill="none" stroke="#fff" stroke-width="1.1" stroke-linejoin="round" stroke-linecap="round" />
<polyline points="1164.6,298.0 1173.9,368.3 1182.1,434.9" fill="none" stroke="#fff" stroke-width="1.1" stroke-linejoin="round" stroke-linecap="round" />
<polyline points="1173.3,366.6 1183.9,375.3 1184.8,379.7" fill="none" stroke="#fff" stroke-width="1.45" stroke-linejoin="round" stroke-linecap="round" />
<polyline points="1292.7,298.0 1292.7,409.6" fill="none" stroke="#fff" stroke-width="1.45" stroke-linejoin="round" stroke-linecap="round" />
<polyline points="1321.7,298.0 1321.7,434.9" fill="none" stroke="#fff" stroke-width="1.45" stroke-linejoin="round" stroke-linecap="round" />
<polyline points="1380.9,298.0 1380.9,434.9" fill="none" stroke="#fff" stroke-width="1.45" stroke-linejoin="round" stroke-linecap="round" />
<polyline points="1438.6,350.7 1438.6,434.9" fill="none" stroke="#fff" stroke-width="1.45" stroke-linejoin="round" stroke-linecap="round" />
<polyline points="1276.0,409.6 1321.7,409.6" fill="none" stroke="#fff" stroke-width="1.45" stroke-linejoin="round" stroke-linecap="round" />
<polyline points="737.8,481.6 744.8,487.7 750.1,498.3 752.7,512.3 753.6,517.6 764.1,522.9 771.2,526.4 788.7,531.7 794.0,534.3 820.4,536.1 850.3,536.1 869.6,532.6 880.1,531.7 885.4,527.3 903.0,526.4 916.0,522.9" fill="none" stroke="#fff" stroke-width="1.5" stroke-linejoin="round" stroke-linecap="round" />
<polyline points="787.0,535.2 778.2,542.2 771.2,548.4 753.6,550.1 746.5,558.0 737.8,565.1" fill="none" stroke="#fff" stroke-width="1.3" stroke-linejoin="round" stroke-linecap="round" />
<polyline points="830.9,435.0 838.0,439.4 855.5,442.9 874.9,449.9 894.2,457.9 916.0,465.8" fill="none" stroke="#fff" stroke-width="1.45" stroke-linejoin="round" stroke-linecap="round" />
<polyline points="916.0,464.9 938.9,477.2 963.5,486.9 982.8,493.0 993.3,500.0 1010.9,510.6 1028.5,514.1 1049.6,521.1 1063.7,529.9 1096.0,535.2" fill="none" stroke="#fff" stroke-width="1.4" stroke-linejoin="round" stroke-linecap="round" />
<polyline points="963.5,486.9 975.8,486.0 978.4,481.6 982.8,485.1 996.9,478.9 1002.1,472.8 1002.1,466.6" fill="none" stroke="#fff" stroke-width="1.45" stroke-linejoin="round" stroke-linecap="round" />
<polyline points="939.7,477.2 939.7,510.6 930.1,516.7 916.0,522.0" fill="none" stroke="#fff" stroke-width="1.45" stroke-linejoin="round" stroke-linecap="round" />
<polyline points="972.2,435.0 977.5,438.9 1096.0,439.4" fill="none" stroke="#fff" stroke-width="1.45" stroke-linejoin="round" stroke-linecap="round" />
<polyline points="998.6,435.0 998.6,449.1" fill="none" stroke="#fff" stroke-width="1.45" stroke-linejoin="round" stroke-linecap="round" />
<polyline points="1011.8,435.0 1011.8,439.4" fill="none" stroke="#fff" stroke-width="1.45" stroke-linejoin="round" stroke-linecap="round" />
<polyline points="1026.7,435.0 1026.7,454.3" fill="none" stroke="#fff" stroke-width="1.45" stroke-linejoin="round" stroke-linecap="round" />
<polyline points="1040.8,435.0 1040.8,454.3" fill="none" stroke="#fff" stroke-width="1.45" stroke-linejoin="round" stroke-linecap="round" />
<polyline points="1084.8,435.0 1084.8,512.3" fill="none" stroke="#fff" stroke-width="1.45" stroke-linejoin="round" stroke-linecap="round" />
<polyline points="998.6,449.1 1002.1,454.3 1030.3,464.0 1049.6,471.0 1060.1,477.2 1074.2,489.5 1081.2,496.5 1096.0,497.4" fill="none" stroke="#fff" stroke-width="1.4" stroke-linejoin="round" stroke-linecap="round" />
<polyline points="1060.1,477.2 1067.2,470.2 1096.0,469.3" fill="none" stroke="#fff" stroke-width="1.45" stroke-linejoin="round" stroke-linecap="round" />
<polyline points="1070.7,486.0 1076.0,483.3 1096.0,483.3" fill="none" stroke="#fff" stroke-width="1.45" stroke-linejoin="round" stroke-linecap="round" />
<polyline points="1086.2,498.3 1086.2,512.3 1096.0,512.3" fill="none" stroke="#fff" stroke-width="1.45" stroke-linejoin="round" stroke-linecap="round" />
<polyline points="1096.0,439.4 1182.1,439.4" fill="none" stroke="#fff" stroke-width="1.45" stroke-linejoin="round" stroke-linecap="round" />
<polyline points="1096.0,454.3 1131.2,454.3" fill="none" stroke="#fff" stroke-width="1.45" stroke-linejoin="round" stroke-linecap="round" />
<polyline points="1143.5,469.3 1182.1,469.3" fill="none" stroke="#fff" stroke-width="1.45" stroke-linejoin="round" stroke-linecap="round" />
<polyline points="1096.0,497.4 1276.0,497.4" fill="none" stroke="#fff" stroke-width="1.45" stroke-linejoin="round" stroke-linecap="round" />
<polyline points="1171.6,512.3 1190.9,512.3" fill="none" stroke="#fff" stroke-width="1.45" stroke-linejoin="round" stroke-linecap="round" />
<polyline points="1173.3,528.2 1276.0,528.2" fill="none" stroke="#fff" stroke-width="1.45" stroke-linejoin="round" stroke-linecap="round" />
<polyline points="1173.3,556.3 1276.0,556.3" fill="none" stroke="#fff" stroke-width="1.45" stroke-linejoin="round" stroke-linecap="round" />
<polyline points="1096.0,483.3 1115.3,483.3" fill="none" stroke="#fff" stroke-width="1.45" stroke-linejoin="round" stroke-linecap="round" />
<polyline points="1096.0,469.3 1115.3,469.3" fill="none" stroke="#fff" stroke-width="1.45" stroke-linejoin="round" stroke-linecap="round" />
<polyline points="1115.3,435.0 1115.3,533.4" fill="none" stroke="#fff" stroke-width="1.45" stroke-linejoin="round" stroke-linecap="round" />
<polyline points="1144.3,435.0 1144.3,571.9" fill="none" stroke="#fff" stroke-width="1.45" stroke-linejoin="round" stroke-linecap="round" />
<polyline points="1232.2,497.4 1232.2,571.9" fill="none" stroke="#fff" stroke-width="1.45" stroke-linejoin="round" stroke-linecap="round" />
<polyline points="1247.2,497.4 1247.2,571.9" fill="none" stroke="#fff" stroke-width="1.45" stroke-linejoin="round" stroke-linecap="round" />
<polyline points="1262.1,497.4 1262.1,571.9" fill="none" stroke="#fff" stroke-width="1.45" stroke-linejoin="round" stroke-linecap="round" />
<polyline points="1175.1,528.2 1175.1,571.9" fill="none" stroke="#fff" stroke-width="1.45" stroke-linejoin="round" stroke-linecap="round" />
<polyline points="1190.0,528.2 1190.0,571.9" fill="none" stroke="#fff" stroke-width="1.45" stroke-linejoin="round" stroke-linecap="round" />
<polyline points="1100.4,497.4 1100.4,533.4" fill="none" stroke="#fff" stroke-width="1.45" stroke-linejoin="round" stroke-linecap="round" />
<polyline points="1129.4,497.4 1129.4,533.4" fill="none" stroke="#fff" stroke-width="1.45" stroke-linejoin="round" stroke-linecap="round" />
<polyline points="1212.0,528.2 1212.0,571.9" fill="none" stroke="#fff" stroke-width="1.45" stroke-linejoin="round" stroke-linecap="round" />
<polyline points="1180.0,435.0 1189.2,496.5 1199.7,571.9" fill="none" stroke="#fff" stroke-width="1.1" stroke-linejoin="round" stroke-linecap="round" />
<polyline points="1182.1,435.0 1191.4,496.5 1201.8,571.9" fill="none" stroke="#fff" stroke-width="1.1" stroke-linejoin="round" stroke-linecap="round" />
<polyline points="1096.0,540.5 1106.5,533.4 1148.7,533.4 1162.8,540.5" fill="none" stroke="#fff" stroke-width="1.45" stroke-linejoin="round" stroke-linecap="round" />
<polyline points="1144.3,533.4 1148.7,547.5 1155.8,558.0 1157.5,571.9" fill="none" stroke="#fff" stroke-width="1.45" stroke-linejoin="round" stroke-linecap="round" />
<polyline points="1291.8,439.4 1439.5,439.4" fill="none" stroke="#fff" stroke-width="1.45" stroke-linejoin="round" stroke-linecap="round" />
<polyline points="1440.4,468.4 1452.7,468.4" fill="none" stroke="#fff" stroke-width="1.45" stroke-linejoin="round" stroke-linecap="round" />
<polyline points="1276.0,497.4 1320.8,497.4" fill="none" stroke="#fff" stroke-width="1.45" stroke-linejoin="round" stroke-linecap="round" />
<polyline points="1292.7,512.3 1320.8,512.3" fill="none" stroke="#fff" stroke-width="1.45" stroke-linejoin="round" stroke-linecap="round" />
<polyline points="1276.0,542.2 1404.3,542.2" fill="none" stroke="#fff" stroke-width="1.45" stroke-linejoin="round" stroke-linecap="round" />
<polyline points="1276.0,527.3 1293.6,527.3" fill="none" stroke="#fff" stroke-width="1.45" stroke-linejoin="round" stroke-linecap="round" />
<polyline points="1276.0,556.3 1404.3,556.3" fill="none" stroke="#fff" stroke-width="1.45" stroke-linejoin="round" stroke-linecap="round" />
<polyline points="1316.4,564.2 1337.5,564.2" fill="none" stroke="#fff" stroke-width="1.45" stroke-linejoin="round" stroke-linecap="round" />
<polyline points="1291.8,439.4 1291.8,571.9" fill="none" stroke="#fff" stroke-width="1.45" stroke-linejoin="round" stroke-linecap="round" />
<polyline points="1380.9,435.0 1380.9,542.2" fill="none" stroke="#fff" stroke-width="1.45" stroke-linejoin="round" stroke-linecap="round" />
<polyline points="1439.5,439.4 1439.5,529.9" fill="none" stroke="#fff" stroke-width="1.45" stroke-linejoin="round" stroke-linecap="round" />
<polyline points="1351.6,542.2 1351.6,571.9" fill="none" stroke="#fff" stroke-width="1.45" stroke-linejoin="round" stroke-linecap="round" />
<polyline points="1365.6,542.2 1365.6,571.9" fill="none" stroke="#fff" stroke-width="1.45" stroke-linejoin="round" stroke-linecap="round" />
<polyline points="1381.5,542.2 1381.5,571.9" fill="none" stroke="#fff" stroke-width="1.45" stroke-linejoin="round" stroke-linecap="round" />
<polyline points="1278.6,526.4 1278.6,571.9" fill="none" stroke="#fff" stroke-width="1.45" stroke-linejoin="round" stroke-linecap="round" />
<polyline points="1321.4,435.0 1321.4,529.9 1315.6,538.7" fill="none" stroke="#fff" stroke-width="1.45" stroke-linejoin="round" stroke-linecap="round" />
<polyline points="820.4,679.2 841.5,670.4 855.5,664.3 864.3,663.1 916.0,663.4" fill="none" stroke="#fff" stroke-width="1.45" stroke-linejoin="round" stroke-linecap="round" />
<polyline points="863.4,663.4 862.6,672.2 859.0,681.0 857.3,695.0 855.5,705.6" fill="none" stroke="#fff" stroke-width="1.45" stroke-linejoin="round" stroke-linecap="round" />
<polyline points="750.1,708.9 760.6,698.6 771.2,693.3" fill="none" stroke="#fff" stroke-width="1.45" stroke-linejoin="round" stroke-linecap="round" />
<polyline points="916.0,663.4 923.0,664.3 928.3,669.6 935.3,670.4 940.6,667.8 949.4,659.9 956.4,658.1 967.0,659.0" fill="none" stroke="#fff" stroke-width="1.45" stroke-linejoin="round" stroke-linecap="round" />
<polyline points="992.5,670.4 1010.9,698.6" fill="none" stroke="#fff" stroke-width="0.8" stroke-linejoin="round" stroke-linecap="round" />
<polyline points="1155.8,586.1 1276.0,586.1" fill="none" stroke="#fff" stroke-width="1.45" stroke-linejoin="round" stroke-linecap="round" />
<polyline points="1199.7,572.0 1199.7,603.6 1210.3,617.7 1219.0,631.8 1226.1,645.8 1227.0,656.4" fill="none" stroke="#fff" stroke-width="1.45" stroke-linejoin="round" stroke-linecap="round" />
<polyline points="1247.2,586.1 1250.7,607.2 1251.6,624.7" fill="none" stroke="#fff" stroke-width="1.45" stroke-linejoin="round" stroke-linecap="round" />
<polyline points="1155.8,572.0 1155.8,609.8 1171.6,609.8" fill="none" stroke="#fff" stroke-width="1.45" stroke-linejoin="round" stroke-linecap="round" />
<polyline points="1233.1,572.0 1233.1,586.1" fill="none" stroke="#fff" stroke-width="1.45" stroke-linejoin="round" stroke-linecap="round" />
<polyline points="1263.9,572.0 1263.9,586.1" fill="none" stroke="#fff" stroke-width="1.45" stroke-linejoin="round" stroke-linecap="round" />
<polyline points="1180.4,609.8 1194.4,615.9 1208.5,614.2" fill="none" stroke="#fff" stroke-width="1.45" stroke-linejoin="round" stroke-linecap="round" />
<polyline points="1254.2,630.0 1263.0,640.6 1276.0,646.7" fill="none" stroke="#fff" stroke-width="1.45" stroke-linejoin="round" stroke-linecap="round" />
<polyline points="1157.5,572.0 1157.5,572.0" fill="none" stroke="#fff" stroke-width="1.45" stroke-linejoin="round" stroke-linecap="round" />
<polyline points="1276.0,586.9 1341.9,586.9" fill="none" stroke="#fff" stroke-width="1.45" stroke-linejoin="round" stroke-linecap="round" />
<polyline points="1292.7,572.0 1292.7,615.9" fill="none" stroke="#fff" stroke-width="1.45" stroke-linejoin="round" stroke-linecap="round" />
<polyline points="1337.5,572.0 1337.5,586.9" fill="none" stroke="#fff" stroke-width="1.45" stroke-linejoin="round" stroke-linecap="round" />
<polyline points="1351.6,572.0 1351.6,586.9" fill="none" stroke="#fff" stroke-width="1.45" stroke-linejoin="round" stroke-linecap="round" />
<polyline points="1314.7,596.6 1314.7,615.9" fill="none" stroke="#fff" stroke-width="1.45" stroke-linejoin="round" stroke-linecap="round" />
<polyline points="1365.6,572.0 1365.6,586.9 1372.7,586.9 1379.7,572.0" fill="none" stroke="#fff" stroke-width="1.45" stroke-linejoin="round" stroke-linecap="round" />
<polyline points="1341.9,586.9 1341.9,595.7 1318.2,595.7" fill="none" stroke="#fff" stroke-width="1.45" stroke-linejoin="round" stroke-linecap="round" />
<polyline points="1342.8,618.6 1452.7,618.6" fill="none" stroke="#fff" stroke-width="1.45" stroke-linejoin="round" stroke-linecap="round" />
<polyline points="1342.8,623.0 1343.7,663.4 1338.4,673.1 1339.3,691.5" fill="none" stroke="#fff" stroke-width="1.45" stroke-linejoin="round" stroke-linecap="round" />
<polyline points="1276.0,645.8 1293.6,646.7 1311.2,656.4 1338.4,673.1" fill="none" stroke="#fff" stroke-width="1.45" stroke-linejoin="round" stroke-linecap="round" />
<polyline points="1316.4,695.0 1328.7,691.5 1434.2,689.8 1452.7,695.0" fill="none" stroke="#fff" stroke-width="1.45" stroke-linejoin="round" stroke-linecap="round" />
<polyline points="1430.7,594.9 1431.6,615.9" fill="none" stroke="#fff" stroke-width="1.45" stroke-linejoin="round" stroke-linecap="round" />
<polyline points="1276.0,603.6 1328.7,609.8 1363.9,608.9 1399.0,603.6 1452.7,612.4" fill="none" stroke="#dfe2e6" stroke-width="1" stroke-linejoin="round" stroke-linecap="round" />
<polyline points="1175.5,571.7 1380.0,571.7" fill="none" stroke="#fff" stroke-width="1.45" stroke-linejoin="round"/>
<polyline points="1264.0,578.6 1366.0,578.6" fill="none" stroke="#fff" stroke-width="1.45" stroke-linejoin="round"/>
<polyline points="1313.5,596.6 1342.5,596.6 1342.5,587.0" fill="none" stroke="#fff" stroke-width="1.45" stroke-linejoin="round"/>
<polyline points="1175.5,557.0 1175.5,587.0" fill="none" stroke="#fff" stroke-width="1.45" stroke-linejoin="round"/>
<polyline points="1189.3,557.0 1189.3,587.0" fill="none" stroke="#fff" stroke-width="1.45" stroke-linejoin="round"/>
<polyline points="1200.4,557.0 1200.4,587.0" fill="none" stroke="#fff" stroke-width="1.45" stroke-linejoin="round"/>
<polyline points="1233.5,557.0 1233.5,587.0" fill="none" stroke="#fff" stroke-width="1.45" stroke-linejoin="round"/>
<polyline points="1248.7,557.0 1248.7,587.0" fill="none" stroke="#fff" stroke-width="1.45" stroke-linejoin="round"/>
<polyline points="1263.8,557.0 1263.8,587.0" fill="none" stroke="#fff" stroke-width="1.45" stroke-linejoin="round"/>
<polyline points="1279.0,557.0 1279.0,587.0" fill="none" stroke="#fff" stroke-width="1.45" stroke-linejoin="round"/>
<polyline points="1294.2,557.0 1294.2,587.0" fill="none" stroke="#fff" stroke-width="1.45" stroke-linejoin="round"/>
<polyline points="1352.0,557.0 1352.0,587.0" fill="none" stroke="#fff" stroke-width="1.45" stroke-linejoin="round"/>
<polyline points="1366.0,557.0 1366.0,587.0" fill="none" stroke="#fff" stroke-width="1.45" stroke-linejoin="round"/>
<polyline points="1379.7,557.0 1379.7,587.0" fill="none" stroke="#fff" stroke-width="1.45" stroke-linejoin="round"/>
<polyline points="1337.0,556.6 1337.0,572.0" fill="none" stroke="#fff" stroke-width="1.45" stroke-linejoin="round"/>
</g>
<polyline points="736.0,449.1 743.0,443.8 753.6,442.0 758.9,447.3 771.2,461.4 762.4,470.2 757.1,476.3 767.6,479.8 778.2,477.2 788.7,483.3 808.1,487.7 802.8,494.8 813.3,500.0 823.9,503.6 829.2,512.3 830.9,526.4 834.4,521.1 848.5,522.9 856.4,528.2 853.8,538.7 843.2,547.5 857.3,551.0 866.1,559.8 859.0,566.8 845.0,571.9" fill="none" stroke="#55a470" stroke-width="1.7" stroke-linejoin="round" stroke-linecap="butt" stroke-dasharray="2.3 1.9"/>
<polyline points="739.5,435.0 743.0,440.3 737.8,447.3" fill="none" stroke="#55a470" stroke-width="1.7" stroke-linejoin="round" stroke-linecap="butt" stroke-dasharray="2.3 1.9"/>
<polyline points="850.3,572.0 859.0,580.8 866.1,579.9 867.0,589.6 864.3,596.6 871.4,603.6 878.4,611.6 874.9,621.2 877.5,626.5 873.1,637.0 866.1,645.8 867.0,652.0" fill="none" stroke="#55a470" stroke-width="1.7" stroke-linejoin="round" stroke-linecap="butt" stroke-dasharray="2.3 1.9"/>
<polyline points="1106.9,298.0 1106.9,317.3 1110.1,329.6 1115.3,338.4 1129.4,352.5 1134.7,363.0 1135.0,434.9" fill="none" stroke="#f1bd4c" stroke-width="5.0" stroke-linejoin="round" stroke-linecap="round" /><polyline points="1106.9,298.0 1106.9,317.3 1110.1,329.6 1115.3,338.4 1129.4,352.5 1134.7,363.0 1135.0,434.9" fill="none" stroke="#fde8a6" stroke-width="2.3999999999999995" stroke-linejoin="round" stroke-linecap="round" />
<polyline points="1135.0,435.0 1135.0,475.4 1139.9,484.2 1154.0,498.3 1165.4,508.8 1167.2,522.9 1167.2,571.9" fill="none" stroke="#f1bd4c" stroke-width="5.0" stroke-linejoin="round" stroke-linecap="round" /><polyline points="1135.0,435.0 1135.0,475.4 1139.9,484.2 1154.0,498.3 1165.4,508.8 1167.2,522.9 1167.2,571.9" fill="none" stroke="#fde8a6" stroke-width="2.3999999999999995" stroke-linejoin="round" stroke-linecap="round" />
<polyline points="1167.2,572.0 1168.9,582.5 1169.5,603.6 1173.3,609.8 1187.4,624.7 1199.7,637.9 1201.5,647.6 1205.9,659.9 1206.4,667.8 1206.4,677.5 1204.1,684.5 1198.0,693.3 1190.9,700.3" fill="none" stroke="#f1bd4c" stroke-width="5.0" stroke-linejoin="round" stroke-linecap="round" /><polyline points="1167.2,572.0 1168.9,582.5 1169.5,603.6 1173.3,609.8 1187.4,624.7 1199.7,637.9 1201.5,647.6 1205.9,659.9 1206.4,667.8 1206.4,677.5 1204.1,684.5 1198.0,693.3 1190.9,700.3" fill="none" stroke="#fde8a6" stroke-width="2.3999999999999995" stroke-linejoin="round" stroke-linecap="round" />
<polyline points="1212.0,675.7 1226.1,659.9 1236.6,645.8 1250.7,628.2 1257.7,622.1 1276.0,616.8" fill="none" stroke="#f1bd4c" stroke-width="4.4" stroke-linejoin="round" stroke-linecap="round" /><polyline points="1212.0,675.7 1226.1,659.9 1236.6,645.8 1250.7,628.2 1257.7,622.1 1276.0,616.8" fill="none" stroke="#fde8a6" stroke-width="1.7999999999999998" stroke-linejoin="round" stroke-linecap="round" />
<polyline points="1276.0,617.5 1337.5,617.4" fill="none" stroke="#f1bd4c" stroke-width="4.4" stroke-linejoin="round" stroke-linecap="round" /><polyline points="1276.0,617.5 1337.5,617.4" fill="none" stroke="#fde8a6" stroke-width="1.7999999999999998" stroke-linejoin="round" stroke-linecap="round" />
<polyline points="1224.3,542.6 1276.0,542.6" fill="none" stroke="#f1bd4c" stroke-width="4.6000000000000005" stroke-linejoin="round" stroke-linecap="round" /><polyline points="1224.3,542.6 1276.0,542.6" fill="none" stroke="#fde8a6" stroke-width="2.0" stroke-linejoin="round" stroke-linecap="round" />
<polyline points="1276.0,542.2 1312.0,542.2 1314.3,544.9 1315.0,571.9" fill="none" stroke="#f1bd4c" stroke-width="4.6000000000000005" stroke-linejoin="round" stroke-linecap="round" /><polyline points="1276.0,542.2 1312.0,542.2 1314.3,544.9 1315.0,571.9" fill="none" stroke="#fde8a6" stroke-width="2.0" stroke-linejoin="round" stroke-linecap="round" />
<polyline points="1314.3,572.0 1314.3,589.6 1317.3,596.6 1337.5,615.9 1342.8,621.2 1365.6,640.6 1371.8,651.1 1378.0,658.1 1385.0,660.8 1452.7,660.8" fill="none" stroke="#f1bd4c" stroke-width="4.6000000000000005" stroke-linejoin="round" stroke-linecap="round" /><polyline points="1314.3,572.0 1314.3,589.6 1317.3,596.6 1337.5,615.9 1342.8,621.2 1365.6,640.6 1371.8,651.1 1378.0,658.1 1385.0,660.8 1452.7,660.8" fill="none" stroke="#fde8a6" stroke-width="2.0" stroke-linejoin="round" stroke-linecap="round" />
<polyline points="937.1,708.9 951.2,705.6 958.2,703.8 967.0,695.0 974.0,692.4 982.8,692.9 1003.9,698.6 1018.0,703.0 1028.5,708.9" fill="none" stroke="#f1bd4c" stroke-width="5.0" stroke-linejoin="round" stroke-linecap="round" /><polyline points="937.1,708.9 951.2,705.6 958.2,703.8 967.0,695.0 974.0,692.4 982.8,692.9 1003.9,698.6 1018.0,703.0 1028.5,708.9" fill="none" stroke="#fde8a6" stroke-width="2.3999999999999995" stroke-linejoin="round" stroke-linecap="round" />
<g font-family="Liberation Sans, sans-serif" opacity=".999">
<text x="783.2" y="385.9" font-size="12.3" font-weight="400" fill="#4a4a4a" stroke="#fff" stroke-width="2.6" stroke-linejoin="round" paint-order="stroke"  text-anchor="end" stroke-opacity=".9">Elizabeth Lake</text>
<text x="889.8" y="326.0" font-size="12.3" font-weight="400" fill="#4a4a4a" stroke="#fff" stroke-width="2.6" stroke-linejoin="round" paint-order="stroke" textLength="42.2" lengthAdjust="spacingAndGlyphs"  >Del Sur</text>
<text x="1093.5" y="333.2" font-size="16.8" font-weight="400" fill="#2e2e2e" stroke="#fff" stroke-width="2.6" stroke-linejoin="round" paint-order="stroke" textLength="80.5" lengthAdjust="spacingAndGlyphs"  >Lancaster</text>
<text x="1093.5" y="333.2" font-size="16.8" fill="#2e2e2e" stroke="#2e2e2e" stroke-width=".55" textLength="80.5" lengthAdjust="spacingAndGlyphs">Lancaster</text>
<text x="996.0" y="415.8" font-size="12.5" font-weight="400" fill="#4a4a4a" stroke="#fff" stroke-width="2.6" stroke-linejoin="round" paint-order="stroke" textLength="62.4" lengthAdjust="spacingAndGlyphs"  >Quartz Hill</text>
<text x="1217.5" y="378.0" font-size="14.6" font-weight="400" fill="#4b82ea" stroke="#fff" stroke-width="2.6" stroke-linejoin="round" paint-order="stroke" textLength="66.0" lengthAdjust="spacingAndGlyphs"  >Palmdale</text>
<text x="1220.7" y="393.8" font-size="14.6" font-weight="400" fill="#4b82ea" stroke="#fff" stroke-width="2.6" stroke-linejoin="round" paint-order="stroke" textLength="61.3" lengthAdjust="spacingAndGlyphs"  >Regional</text>
<text x="1226.7" y="409.6" font-size="14.6" font-weight="400" fill="#4b82ea" stroke="#fff" stroke-width="2.6" stroke-linejoin="round" paint-order="stroke" textLength="47.9" lengthAdjust="spacingAndGlyphs"  >Airport</text>
<text x="874.0" y="469.3" font-size="12.5" font-weight="400" fill="#4a4a4a" stroke="#fff" stroke-width="2.6" stroke-linejoin="round" paint-order="stroke" textLength="76.3" lengthAdjust="spacingAndGlyphs"  >Leona Valley</text>
<text x="984.6" y="462.6" font-size="8.9" font-weight="700" fill="#666" stroke="#fff" stroke-width="2" stroke-linejoin="round" paint-order="stroke" textLength="83.4" lengthAdjust="spacing"  style="-webkit-text-stroke:0">RANCHO VISTA</text>
<text x="944.1" y="511.8" font-size="8.9" font-weight="700" fill="#666" stroke="#fff" stroke-width="2" stroke-linejoin="round" paint-order="stroke" textLength="68.6" lengthAdjust="spacing"  style="-webkit-text-stroke:0">CITY RANCH</text>
<text x="1100.4" y="518.5" font-size="12.5" font-weight="400" fill="#4a4a4a" stroke="#fff" stroke-width="2.6" stroke-linejoin="round" paint-order="stroke" textLength="71.6" lengthAdjust="spacingAndGlyphs"  >Desert View</text>
<text x="1106.2" y="532.6" font-size="12.5" font-weight="400" fill="#4a4a4a" stroke="#fff" stroke-width="2.6" stroke-linejoin="round" paint-order="stroke" textLength="60.1" lengthAdjust="spacingAndGlyphs"  >Highlands</text>
<text x="1168.0" y="547.5" font-size="13" font-weight="400" fill="#3c3c3c" stroke="#fff" stroke-width="2.6" stroke-linejoin="round" paint-order="stroke" textLength="56.0" lengthAdjust="spacingAndGlyphs"  >Palmdale</text>
<text x="1415.7" y="539.6" font-size="12.5" font-weight="400" fill="#4a4a4a" stroke="#fff" stroke-width="2.6" stroke-linejoin="round" paint-order="stroke" textLength="51.1" lengthAdjust="spacingAndGlyphs"  >Antelope</text>
<text x="1423.0" y="552.8" font-size="12.5" font-weight="400" fill="#4a4a4a" stroke="#fff" stroke-width="2.6" stroke-linejoin="round" paint-order="stroke" textLength="36.5" lengthAdjust="spacingAndGlyphs"  >Center</text>
<text x="1425.0" y="591.0" font-size="12.5" font-weight="400" fill="#4a4a4a" stroke="#fff" stroke-width="2.6" stroke-linejoin="round" paint-order="stroke" textLength="61.0" lengthAdjust="spacingAndGlyphs"  >Sun Village</text>
<text x="1124.7" y="592.2" font-size="12.5" font-weight="400" fill="#4a4a4a" stroke="#fff" stroke-width="2.6" stroke-linejoin="round" paint-order="stroke" textLength="54.8" lengthAdjust="spacingAndGlyphs"  >Lakeview</text>
<text x="1192.7" y="627.9" font-size="8.9" font-weight="700" fill="#666" stroke="#fff" stroke-width="2" stroke-linejoin="round" paint-order="stroke" textLength="39.5" lengthAdjust="spacing"  style="-webkit-text-stroke:0">ALPINE</text>
<text x="966.6" y="602.2" font-size="14.6" font-weight="400" fill="#3f9b59" stroke="#fff" stroke-width="1.5" stroke-linejoin="round" paint-order="stroke" textLength="36.4" lengthAdjust="spacingAndGlyphs"  stroke-opacity=".5">Ritter</text>
<text x="945.9" y="618.0" font-size="14.6" font-weight="400" fill="#3f9b59" stroke="#fff" stroke-width="1.5" stroke-linejoin="round" paint-order="stroke" textLength="79.1" lengthAdjust="spacingAndGlyphs"  stroke-opacity=".5">Ranch Park</text>
<text x="966.0" y="668.7" font-size="12.5" font-weight="400" fill="#3c3c3c" stroke="#fff" stroke-width="2.6" stroke-linejoin="round" paint-order="stroke" textLength="47.6" lengthAdjust="spacingAndGlyphs"  >Mission</text>
<text x="746.6" y="701.4" font-size="18" textLength="52.5" lengthAdjust="spacingAndGlyphs" stroke="#fff" stroke-width="2" paint-order="stroke" stroke-opacity=".8"><tspan fill="#4285f4">G</tspan><tspan fill="#ea4335">o</tspan><tspan fill="#fbbc05">o</tspan><tspan fill="#4285f4">g</tspan><tspan fill="#34a853">l</tspan><tspan fill="#ea4335">e</tspan></text>
<text x="743.9" y="688.9" font-size="12.5" font-weight="400" fill="#4a4a4a" stroke="#fff" stroke-width="2.6" stroke-linejoin="round" paint-order="stroke" textLength="79.1" lengthAdjust="spacingAndGlyphs"  >Sleepy Valley</text>
<text x="1388.5" y="665.2" font-size="12.5" font-weight="400" fill="#4a4a4a" stroke="#fff" stroke-width="2.6" stroke-linejoin="round" paint-order="stroke" textLength="56.2" lengthAdjust="spacingAndGlyphs"  >Littlerock</text>
<text x="816.9" y="714.3" font-size="12.5" font-weight="400" fill="#4a4a4a" stroke="#fff" stroke-width="2.6" stroke-linejoin="round" paint-order="stroke" textLength="65.0" lengthAdjust="spacingAndGlyphs"  >Agua Dulce</text>
<rect x="1098.2" y="301.9" width="18.4" height="14.0" rx="6.8" fill="#fff" stroke="#707070" stroke-width="1"/><text x="1107.4" y="312.2" font-size="9.3" fill="#4a4a4a" text-anchor="middle" textLength="9.5" lengthAdjust="spacingAndGlyphs">14</text>
<rect x="1126.9" y="441.7" width="18.4" height="14.0" rx="6.8" fill="#fff" stroke="#707070" stroke-width="1"/><text x="1136.1" y="452.0" font-size="9.3" fill="#4a4a4a" text-anchor="middle" textLength="9.5" lengthAdjust="spacingAndGlyphs">14</text>
<rect x="1197.2" y="668.7" width="18.4" height="14.0" rx="6.8" fill="#fff" stroke="#707070" stroke-width="1"/><text x="1206.4" y="679.0" font-size="9.3" fill="#4a4a4a" text-anchor="middle" textLength="9.5" lengthAdjust="spacingAndGlyphs">14</text>
<rect x="1234.0" y="534.8" width="22.8" height="14.8" rx="7.2" fill="#fff" stroke="#707070" stroke-width="1"/><text x="1245.4" y="545.5" font-size="9.3" fill="#4a4a4a" text-anchor="middle" textLength="14.5" lengthAdjust="spacingAndGlyphs">138</text>
<path d="M1250.7 447.3 C1247 440 1239.3 434.5 1239.3 426 A11.4 11.4 0 1 1 1262.1 426 C1262.1 434.5 1254.4 440 1250.7 447.3Z" fill="#4a80e8"/>
<path d="M1250.7 418.2 q1 0 1 1.6 v3.4 l6 3.5 v1.7 l-6 -1.8 v3.6 l1.8 1.4 v1.2 l-2.8 -.8 l-2.8 .8 v-1.2 l1.8 -1.4 v-3.6 l-6 1.8 v-1.7 l6 -3.5 v-3.4 q0 -1.6 1 -1.6z" fill="#fff"/>
<path d="M1106.9 502.9 C1104.4 494.5 1095.9 488.6 1095.9 479.2 A11 11 0 1 1 1117.9 479.2 C1117.9 488.6 1109.4 494.5 1106.9 502.9Z" fill="#ea2a1c" stroke="#7a150c" stroke-width="1.5"/>
<circle cx="1106.9" cy="478.4" r="4.9" fill="#f6f1e8" stroke="#6b120a" stroke-width="1.5"/>
<rect x="1089" y="696" width="365" height="14" fill="#f5f5f5" fill-opacity=".72"/>
<text x="1092.2" y="704.9" font-size="9.6" fill="#2f2f2f" textLength="81.4" lengthAdjust="spacingAndGlyphs">Keyboard shortcuts</text>
<text x="1185.7" y="704.9" font-size="9.6" fill="#2f2f2f" textLength="102.3" lengthAdjust="spacingAndGlyphs">Map data ©2023 Google</text>
<text x="1300.3" y="704.9" font-size="9.6" fill="#2f2f2f" textLength="55.2" lengthAdjust="spacingAndGlyphs">Terms of Use</text>
<text x="1367.3" y="704.9" font-size="9.6" fill="#2f2f2f" textLength="78.1" lengthAdjust="spacingAndGlyphs">Report a map error</text>
</g>
<defs><filter id="sh" x="-20%" y="-20%" width="140%" height="150%"><feDropShadow dx="0" dy="1" stdDeviation="1.2" flood-color="#000" flood-opacity=".28"/></filter></defs>
<rect x="1404.8" y="308.9" width="37.3" height="36.9" rx="2" fill="#fff" filter="url(#sh)"/>
<path d="M1415.8 324.4V320H1420.2M1426.8 320H1431.2V324.4M1431.2 330.4V334.8H1426.8M1420.2 334.8H1415.8V330.4" fill="none" stroke="#5a5a5a" stroke-width="1.9"/>
<rect x="1404.6" y="541.4" width="37.8" height="37.2" rx="2" fill="#fff" filter="url(#sh)"/>
<g transform="translate(1423.3 562.5) scale(.86 .94) translate(-1423.3 -561.4)">
<g fill="#f5b02c" stroke="#d9931a" stroke-width=".5"><circle cx="1423.3" cy="550.2" r="4.4"/><path d="M1417.3 557.2 q0-1.6 1.6-1.6 h8.8 q1.6 0 1.6 1.6 l1.2 8.6 q.2 1.3-1 1.3 l-.9-.1 -.5 -3.5 v9.2 q0 1.6-1.5 1.6 h-1.2 q-1.4 0-1.4-1.6 v-5 h-1.4 v5 q0 1.6-1.4 1.6 h-1.2 q-1.5 0-1.5-1.6 v-9.2 l-.5 3.5 -.9 .1 q-1.2 0-1-1.3z"/></g>
<path d="M1422.4 556 l1.8 0 l-.2 3.6 l-.7 1 l-.7-1z" fill="#d8402a"/>
</g>
<rect x="1404.8" y="609.8" width="37.3" height="75.6" rx="2" fill="#fff" filter="url(#sh)"/>
<rect x="1409.6" y="647.2" width="28" height="1" fill="#e6e6e6"/>
<path d="M1415 628.2H1431.6M1423.3 619.9V636.5M1415 666.9H1431.6" stroke="#606060" stroke-width="3.1" fill="none"/>
<g transform="translate(1400.6,359.6) scale(.84)"><path d="M.5 11.5L1.1 9L7.5 2.6L9.4 4.5L3 10.9Z" fill="#1b3247"/><path d="M8.2 1.9L9.1 1Q9.5.6 9.9 1L11 2.1Q11.4 2.5 11 2.9L10.1 3.8Z" fill="#1b3247"/></g>
<path d="M1425.6 360.6l7.2 7.2m0 -7.2l-7.2 7.2" stroke="#1b3247" stroke-width="2" fill="none"/>
<g transform="translate(1400.6,372.9) scale(.84)"><path d="M.5 11.5L1.1 9L7.5 2.6L9.4 4.5L3 10.9Z" fill="#1b3247"/><path d="M8.2 1.9L9.1 1Q9.5.6 9.9 1L11 2.1Q11.4 2.5 11 2.9L10.1 3.8Z" fill="#1b3247"/></g>
<path d="M1425.6 374l7.2 7.2m0 -7.2l-7.2 7.2" stroke="#1b3247" stroke-width="2" fill="none"/>
<g transform="translate(1400.6,429.6) scale(.84)"><path d="M.5 11.5L1.1 9L7.5 2.6L9.4 4.5L3 10.9Z" fill="#1b3247"/><path d="M8.2 1.9L9.1 1Q9.5.6 9.9 1L11 2.1Q11.4 2.5 11 2.9L10.1 3.8Z" fill="#1b3247"/></g>
<path d="M1425.6 430.7l7.2 7.2m0 -7.2l-7.2 7.2" stroke="#1b3247" stroke-width="2" fill="none"/>
</svg>
</div>

<span class="t" style="left:38.0px;top:18.03px;font-size:15.5px;font-weight:700;color:#f3f6f4;transform:scaleX(1.0116);">Details of Employee</span>
<span class="t" style="left:209.4px;top:19.26px;font-size:10.5px;font-weight:400;color:#1b3247;transform:scaleX(0.9469);">169</span>
<span class="t" style="left:1435.6px;top:18.26px;font-size:10.5px;font-weight:400;color:#f2f5f7;transform:scaleX(1.0870);-webkit-text-stroke:.4px #f2f5f7">Delete</span>
<span class="t" style="left:142.0px;top:48.88px;font-size:9px;font-weight:400;color:#8b969e;transform:scaleX(1.0367);">Employee</span>
<span class="t" style="left:142.0px;top:62.80px;font-size:13px;font-weight:700;color:#1b3247;transform:scaleX(1.0199);">Brandon Taylor</span>
<span class="t" style="left:142.0px;top:83.88px;font-size:9px;font-weight:400;color:#8b969e;transform:scaleX(1.0302);">Position</span>
<span class="t" style="left:142.0px;top:96.69px;font-size:11px;font-weight:400;color:#42525f;transform:scaleX(1.0704);-webkit-text-stroke:.35px #42525f">Technical Support Specialist I</span>
<span class="t" style="left:142.0px;top:124.68px;font-size:9px;font-weight:400;color:#8b969e;transform:scaleX(1.0844);">Department</span>
<span class="t" style="left:142.0px;top:135.19px;font-size:11px;font-weight:400;color:#42525f;transform:scaleX(1.0530);-webkit-text-stroke:.35px #42525f">Sales &amp; Marketing</span>
<span class="t" style="left:340.7px;top:53.88px;font-size:9px;font-weight:400;color:#8b969e;transform:scaleX(1.0553);">Employee reports to</span>
<span class="t" style="left:341.0px;top:66.19px;font-size:11px;font-weight:400;color:#42525f;transform:scaleX(1.0795);-webkit-text-stroke:.35px #42525f">Tony Cariddi</span>
<span class="t" style="left:341.0px;top:83.88px;font-size:9px;font-weight:400;color:#8b969e;transform:scaleX(1.0192);">Position ReportsTo</span>
<span class="t" style="left:341.0px;top:94.69px;font-size:11px;font-weight:400;color:#42525f;transform:scaleX(0.9738);-webkit-text-stroke:.35px #42525f">CMO</span>
<span class="t" style="left:535.0px;top:54.88px;font-size:9px;font-weight:400;color:#8b969e;transform:scaleX(1.0492);">ContactID</span>
<span class="t" style="left:535.0px;top:66.99px;font-size:11px;font-weight:400;color:#596773;transform:scaleX(0.9586);">437</span>
<span class="t" style="left:24.0px;top:170.19px;font-size:11px;font-weight:700;color:#1b3247;transform:scaleX(1.0127);">General info</span>
<span class="t" style="left:130.0px;top:167.59px;font-size:11px;font-weight:400;color:#3c4b58;transform:scaleX(1.0529);-webkit-text-stroke:.2px #3c4b58">Sensitive</span>
<span class="t" style="left:228.6px;top:167.59px;font-size:11px;font-weight:400;color:#3c4b58;transform:scaleX(1.1275);-webkit-text-stroke:.2px #3c4b58">Time-off</span>
<span class="t" style="left:323.4px;top:167.59px;font-size:11px;font-weight:400;color:#3c4b58;-webkit-text-stroke:.2px #3c4b58">Events (1)</span>
<span class="t" style="left:425.0px;top:167.59px;font-size:11px;font-weight:400;color:#3c4b58;transform:scaleX(1.0675);-webkit-text-stroke:.2px #3c4b58">Training</span>
<span class="t" style="left:514.0px;top:167.59px;font-size:11px;font-weight:400;color:#3c4b58;transform:scaleX(1.0539);-webkit-text-stroke:.2px #3c4b58">Reports (2)</span>
<span class="t" style="left:626.8px;top:167.59px;font-size:11px;font-weight:400;color:#3c4b58;transform:scaleX(0.9885);-webkit-text-stroke:.2px #3c4b58">Posts</span>
<span class="t" style="left:718.5px;top:167.59px;font-size:11px;font-weight:400;color:#3c4b58;transform:scaleX(0.9639);-webkit-text-stroke:.2px #3c4b58">Files (1)</span>
<span class="t" style="left:799.8px;top:167.59px;font-size:11px;font-weight:400;color:#3c4b58;transform:scaleX(1.0432);-webkit-text-stroke:.2px #3c4b58">Checklists (1)</span>
<span class="t" style="left:908.4px;top:167.59px;font-size:11px;font-weight:400;color:#3c4b58;transform:scaleX(1.0380);-webkit-text-stroke:.2px #3c4b58">Relations</span>
<span class="t" style="left:41.7px;top:202.56px;font-size:10.5px;font-weight:400;color:#54626e;transform:scaleX(0.9508);">Folder</span>
<span class="t" style="left:170.4px;top:200.99px;font-size:11px;font-weight:400;color:#6b7882;transform:scaleX(0.9584);">Employee is active</span>
<span class="t" style="left:14.4px;top:233.68px;font-size:9px;font-weight:400;color:#8b969e;transform:scaleX(1.0484);">Hire date</span>
<span class="t" style="left:17.0px;top:251.69px;font-size:11px;font-weight:400;color:#54626e;transform:scaleX(1.0299);">2/14/2023</span>
<span class="t" style="left:151.5px;top:233.68px;font-size:9px;font-weight:400;color:#8b969e;transform:scaleX(1.0953);">Vacation days</span>
<span class="t" style="left:154.5px;top:251.69px;font-size:11px;font-weight:400;color:#54626e;transform:scaleX(0.7429);">14</span>
<span class="t" style="left:189.3px;top:249.71px;font-size:9.5px;font-weight:400;color:#8b969e;transform:scaleX(1.0155);">per year</span>
<span class="t" style="left:14.4px;top:285.88px;font-size:9px;font-weight:400;color:#8b969e;transform:scaleX(1.0450);">Exempt status</span>
<span class="t" style="left:20.0px;top:302.92px;font-size:11.5px;font-weight:400;color:#54626e;">Non-Exempt</span>
<span class="t" style="left:151.5px;top:285.88px;font-size:9px;font-weight:400;color:#8b969e;transform:scaleX(1.0256);">Sick days</span>
<span class="t" style="left:154.6px;top:303.69px;font-size:11px;font-weight:400;color:#54626e;transform:scaleX(0.8816);">3</span>
<span class="t" style="left:189.3px;top:301.71px;font-size:9.5px;font-weight:400;color:#8b969e;transform:scaleX(1.0155);">per year</span>
<span class="t" style="left:14.4px;top:333.08px;font-size:9px;font-weight:400;color:#8b969e;transform:scaleX(1.0574);">Employment Type</span>
<span class="t" style="left:33.3px;top:352.19px;font-size:11px;font-weight:400;color:#6b7882;transform:scaleX(0.9682);">Permanent</span>
<span class="t" style="left:123.0px;top:352.19px;font-size:11px;font-weight:400;color:#6b7882;transform:scaleX(0.9948);">Temporary</span>
<span class="t" style="left:24.3px;top:379.38px;font-size:9px;font-weight:400;color:#a3acb2;transform:scaleX(1.0753);">Emergency Contact</span>
<span class="t" style="left:24.0px;top:394.18px;font-size:9px;font-weight:400;color:#8b969e;transform:scaleX(1.0258);">Name:</span>
<span class="t" style="left:26.6px;top:412.39px;font-size:11px;font-weight:400;color:#54626e;transform:scaleX(1.0589);">Marilou Taylor</span>
<span class="t" style="left:24.0px;top:431.88px;font-size:9px;font-weight:400;color:#8b969e;transform:scaleX(1.0408);">Phone #:</span>
<span class="t" style="left:26.6px;top:450.69px;font-size:11px;font-weight:400;color:#54626e;transform:scaleX(1.1005);">805-558-8872</span>
<span class="t" style="left:24.0px;top:475.08px;font-size:9px;font-weight:400;color:#8b969e;transform:scaleX(1.0321);">Relationship:</span>
<span class="t" style="left:26.6px;top:493.09px;font-size:11px;font-weight:400;color:#54626e;transform:scaleX(1.0511);">Mother</span>
<span class="t" style="left:340.8px;top:200.38px;font-size:9px;font-weight:400;color:#8b969e;transform:scaleX(1.0528);">Phone numbers</span>
<span class="t" style="left:350.0px;top:225.88px;font-size:9px;font-weight:400;color:#8b969e;transform:scaleX(1.0690);">Cell phone</span>
<span class="t" style="left:421.7px;top:226.99px;font-size:11px;font-weight:400;color:#54626e;transform:scaleX(1.0394);">(805) 791-4364</span>
<span class="t" style="left:340.8px;top:299.58px;font-size:9px;font-weight:400;color:#8b969e;transform:scaleX(1.0401);">Email addresses</span>
<span class="t" style="left:345.6px;top:330.18px;font-size:9px;font-weight:400;color:#8b969e;">Work</span>
<span class="t" style="left:421.7px;top:331.19px;font-size:11px;font-weight:400;color:#54626e;transform:scaleX(1.0845);">brandon.taylor@appward.com</span>
<span class="t" style="left:345.6px;top:408.38px;font-size:9px;font-weight:400;color:#6b7882;transform:scaleX(1.0860);">Custom attributes</span>
<span class="t" style="left:487.3px;top:406.06px;font-size:10.5px;font-weight:400;color:#54626e;transform:scaleX(1.0122);">Attributes</span>
<span class="t" style="left:361.5px;top:434.88px;font-size:9px;font-weight:400;color:#8b969e;transform:scaleX(1.0717);">Birthday</span>
<span class="t" style="left:360.6px;top:451.78px;font-size:9px;font-weight:400;color:#8b969e;transform:scaleX(1.0717);">Birthday</span>
<span class="t" style="left:363.6px;top:473.19px;font-size:11px;font-weight:400;color:#54626e;transform:scaleX(0.9455);">6/11/1996</span>
<span class="t" style="left:736.3px;top:219.28px;font-size:9px;font-weight:400;color:#8b969e;transform:scaleX(1.0416);">Addresses</span>
<span class="t" style="left:745.9px;top:241.36px;font-size:10.5px;font-weight:700;color:#1b3247;transform:scaleX(1.0724);">Home</span>
<span class="t" style="left:745.9px;top:260.56px;font-size:10.5px;font-weight:400;color:#54626e;transform:scaleX(1.0730);">2635 Paxton Ave</span>
<span class="t" style="left:745.9px;top:276.66px;font-size:10.5px;font-weight:400;color:#54626e;transform:scaleX(1.0287);">Palmdale, CA 93551 USA</span>
</body></html>
